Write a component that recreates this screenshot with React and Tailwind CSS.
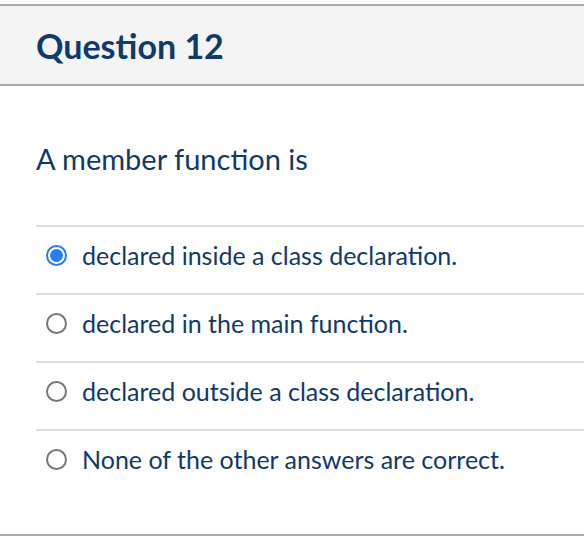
import React from 'react'

const options = [
  { label: 'declared inside a class declaration.', checked: true },
  { label: 'declared in the main function.', checked: false },
  { label: 'declared outside a class declaration.', checked: false },
  { label: 'None of the other answers are correct.', checked: false },
]

const Radio = ({ checked }) =>
  checked ? (
    <span className="flex h-[21px] w-[21px] shrink-0 items-center justify-center rounded-full border-2 border-[#2a7cf6]">
      <span className="h-[13px] w-[13px] rounded-full bg-[#2a7cf6]"></span>
    </span>
  ) : (
    <span className="h-[21px] w-[21px] shrink-0 rounded-full border-2 border-[#777]"></span>
  )

export default function App() {
  return (
    <div className="w-[584px] h-[538px] bg-white pt-[4px] text-[#0f3a6b]" style={{ fontFamily: 'Lato, "Noto Sans", sans-serif' }}>
      <div className="w-full border-y-2 border-[#aaa]">
        {/* Header */}
        <div className="flex h-[78px] items-center bg-[#f4f4f4] pl-[36px] pt-[1px]">
          <h2 className="text-[34px] font-bold leading-none">Question 12</h2>
        </div>
        <div className="border-t-2 border-[#aaa] pl-[36px]">
          <div className="flex h-[139px] items-center pt-[6px]">
            <p className="text-[29px] leading-none">A member function is</p>
          </div>
          <ul>
            {options.map((o, i) => (
              <li
                key={i}
                className="flex h-[68px] items-center gap-[15px] border-t-2 border-[#ddd] pl-[10px] pb-[9px]"
              >
                <Radio checked={o.checked} />
                <span className="text-[25px] leading-none">{o.label}</span>
              </li>
            ))}
          </ul>
          <div className="h-[37px]"></div>
        </div>
      </div>
    </div>
  )
}
